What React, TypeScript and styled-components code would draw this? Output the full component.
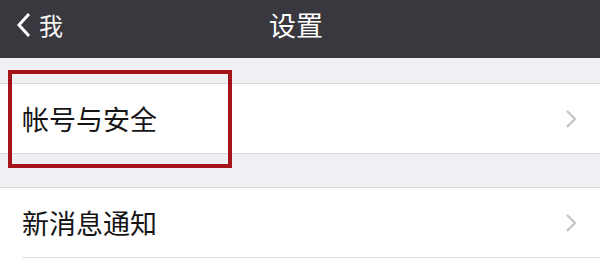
import React from "react";
import styled, { createGlobalStyle } from "styled-components";

const GlobalStyle = createGlobalStyle`
  html, body {
    margin: 0;
    padding: 0;
    background: #efeff4;
    font-family: "Noto Sans CJK SC", "Noto Sans", sans-serif;
  }
`;

const Page = styled.div`
  position: relative;
  width: 600px;
  height: 279px;
  overflow: hidden;
  background: #efeff4;
`;

const NavBar = styled.div`
  display: grid;
  grid-template-columns: 1fr auto 1fr;
  align-items: center;
  height: 58px;
  background: #39383e;
  color: #ffffff;
  box-sizing: border-box;
`;

const Back = styled.div`
  display: flex;
  align-items: center;
  gap: 7px;
  padding-left: 16px;
  padding-bottom: 8px;
  font-size: 24px;
  line-height: 1;
  color: #f4f4f4;
`;

const Title = styled.div`
  font-size: 27px;
  line-height: 1;
  padding-bottom: 10px;
  margin-left: -8px;
`;

const Group = styled.div<{ $gap: number }>`
  margin-top: ${(p) => p.$gap}px;
  background: #ffffff;
  border-top: 1px solid #dadade;
  border-bottom: 1px solid #dadade;
`;

const Row = styled.div<{ $divider?: boolean }>`
  display: flex;
  align-items: center;
  justify-content: space-between;
  height: 69px;
  margin-left: 22px;
  padding-right: 22px;
  border-bottom: ${(p) => (p.$divider ? "1px solid #dcdcdf" : "none")};
`;

const Label = styled.span`
  font-size: 27px;
  color: #151515;
  line-height: 1;
`;

const Highlight = styled.div`
  position: absolute;
  left: 8px;
  top: 70px;
  width: 224px;
  height: 98px;
  border: 4px solid #a5131b;
  box-sizing: border-box;
`;

const Chevron = () => (
  <svg width="14" height="20" viewBox="0 0 14 20">
    <path d="M3 2 L11 10 L3 18" fill="none" stroke="#c4c4c8" strokeWidth="2.2" />
  </svg>
);

const BackArrow = () => (
  <svg width="16" height="26" viewBox="0 0 16 26">
    <path d="M13 2 L3 13 L13 24" fill="none" stroke="#ffffff" strokeWidth="3" />
  </svg>
);

export default function App() {
  return (
    <Page>
      <GlobalStyle />
      <NavBar>
        <Back>
          <BackArrow />
          <span>我</span>
        </Back>
        <Title>设置</Title>
        <div />
      </NavBar>
      <Group $gap={25}>
        <Row>
          <Label>帐号与安全</Label>
          <Chevron />
        </Row>
      </Group>
      <Group $gap={33}>
        <Row $divider>
          <Label>新消息通知</Label>
          <Chevron />
        </Row>
        <Row />
      </Group>
      <Highlight />
    </Page>
  );
}
